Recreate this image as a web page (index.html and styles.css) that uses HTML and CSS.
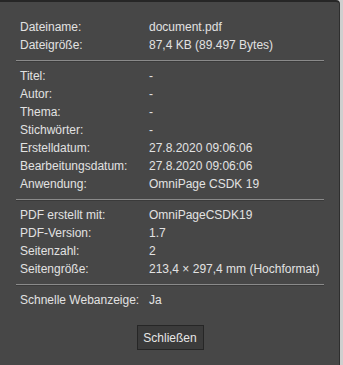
FILE: index.html
```html
<!DOCTYPE html>
<html lang="de">
<head>
  <meta charset="UTF-8" />
  <title>Dokumenteigenschaften</title>
  <link rel="stylesheet" href="styles.css">
</head>
<body>

<div class="dialog">
  <div class="group">
    <div class="row"><span class="label">Dateiname:</span><span class="value">document.pdf</span></div>
    <div class="row"><span class="label">Dateigröße:</span><span class="value">87,4 KB (89.497 Bytes)</span></div>
  </div>
  <hr>
  <div class="group">
    <div class="row"><span class="label">Titel:</span><span class="value">-</span></div>
    <div class="row"><span class="label">Autor:</span><span class="value">-</span></div>
    <div class="row"><span class="label">Thema:</span><span class="value">-</span></div>
    <div class="row"><span class="label">Stichwörter:</span><span class="value">-</span></div>
    <div class="row"><span class="label">Erstelldatum:</span><span class="value">27.8.2020 09:06:06</span></div>
    <div class="row"><span class="label">Bearbeitungsdatum:</span><span class="value">27.8.2020 09:06:06</span></div>
    <div class="row"><span class="label">Anwendung:</span><span class="value">OmniPage CSDK 19</span></div>
  </div>
  <hr>
  <div class="group">
    <div class="row"><span class="label">PDF erstellt mit:</span><span class="value">OmniPageCSDK19</span></div>
    <div class="row"><span class="label">PDF-Version:</span><span class="value">1.7</span></div>
    <div class="row"><span class="label">Seitenzahl:</span><span class="value">2</span></div>
    <div class="row"><span class="label">Seitengröße:</span><span class="value">213,4 × 297,4 mm (Hochformat)</span></div>
  </div>
  <hr>
  <div class="group">
    <div class="row"><span class="label">Schnelle Webanzeige:</span><span class="value">Ja</span></div>
  </div>
  <div class="buttons">
    <button class="btn">Schließen</button>
  </div>
</div>

</body>
</html>
```

FILE: styles.css
```css
* { box-sizing: border-box; }
body {
  margin: 0;
  background: #cfcfcf;
  font-family: "Liberation Sans", Arial, sans-serif;
  font-size: 12px;
  color: #e2e2e2;
  overflow: hidden;
}

.dialog {
  width: 340px;
  height: 365px;
  background: #474747;
  border-top: 2px solid #262626;
  border-right: 1px solid #2e2e2e;
  border-top-right-radius: 4px;
  padding: 16px 15px 0 16px;
}

.row {
  display: flex;
  height: 18px;
  line-height: 18px;
  padding-left: 4px;
  white-space: nowrap;
}

.label { width: 129px; }

hr {
  margin: 6px 0 5px;
  border: none;
  border-top: 1px solid #8a8a8a;
  border-bottom: 1px solid #3a3a3a;
  height: 0;
}

.buttons {
  display: flex;
  justify-content: center;
  margin-top: 16px;
}

.btn {
  font-family: inherit;
  font-size: 12px;
  color: #e6e6e6;
  background: #3b3b3b;
  border: 1px solid #262626;
  width: 67px;
  height: 25px;
  padding: 0;
}
```
